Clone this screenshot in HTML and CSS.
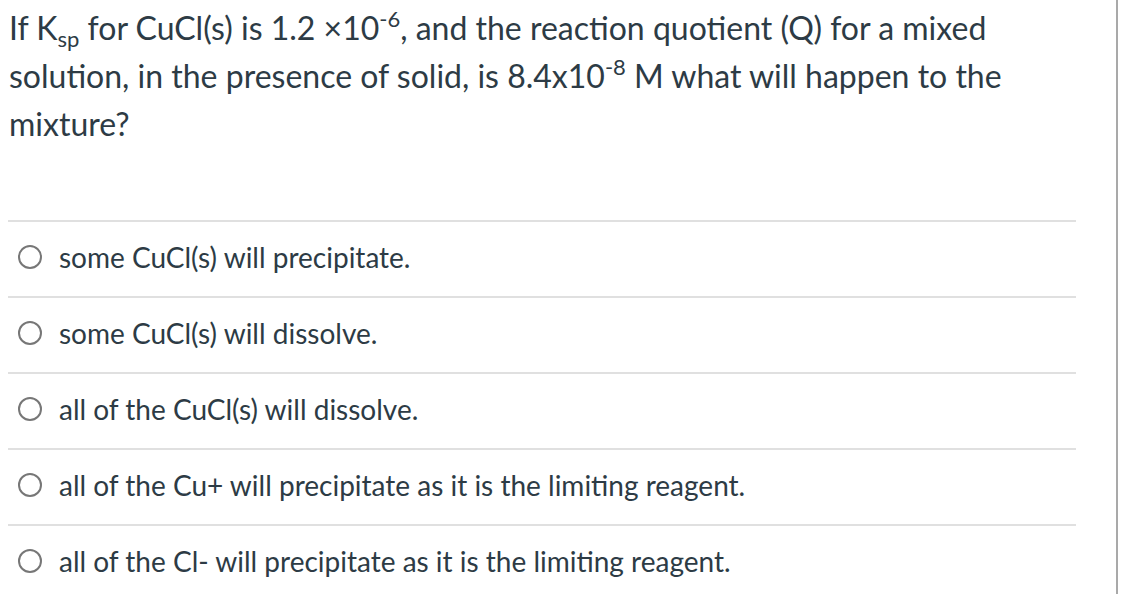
FILE: index.html
```html
<!DOCTYPE html>
<html>
<head>
<meta charset="utf-8">
<link rel="stylesheet" href="styles.css">
</head>
<body>
<div class="page">
  <div class="question">
    <p class="qtext">If K<sub>sp</sub> for CuCl(s) is 1.2 ×10<sup>-6</sup>, and the reaction quotient (Q) for a mixed solution, in the presence of solid, is 8.4x10<sup>-8</sup> M what will happen to the mixture?</p>
  </div>
  <div class="answers">
    <div class="answer"><span class="radio"></span><span class="label">some CuCl(s) will precipitate.</span></div>
    <div class="answer"><span class="radio"></span><span class="label">some CuCl(s) will dissolve.</span></div>
    <div class="answer"><span class="radio"></span><span class="label">all of the CuCl(s) will dissolve.</span></div>
    <div class="answer"><span class="radio"></span><span class="label">all of the Cu+ will precipitate as it is the limiting reagent.</span></div>
    <div class="answer"><span class="radio"></span><span class="label">all of the Cl- will precipitate as it is the limiting reagent.</span></div>
  </div>
</div>
</body>
</html>
```
FILE: styles.css
```css
html, body {
  margin: 0;
  padding: 0;
  background: #fff;
}
body {
  font-family: Lato, "Open Sans", sans-serif;
  color: #2d3b45;
  width: 1122px;
  height: 594px;
  overflow: hidden;
}
.page {
  width: 1116px;
  height: 594px;
  border-right: 2px solid #a9a9a9;
  box-sizing: content-box;
}
.question {
  padding: 4px 0 0 9px;
  height: 216px;
  box-sizing: border-box;
}
.qtext {
  margin: 0;
  font-size: 32px;
  line-height: 48px;
  width: 1040px;
}
.qtext sub, .qtext sup {
  font-size: 22px;
  line-height: 0;
  position: relative;
  vertical-align: baseline;
}
.qtext sub { top: 7px; }
.qtext sup { top: -13px; }
.answers {
  margin: 4px 0 0 8px;
  width: 1068px;
}
.answer {
  display: flex;
  align-items: center;
  height: 76px;
  border-top: 2px solid #e0e0e0;
  box-sizing: border-box;
  padding-bottom: 4px;
}
.radio {
  width: 20px;
  height: 20px;
  border: 2px solid #777;
  border-radius: 50%;
  margin: 0 17px 0 10px;
  flex: none;
}
.label {
  font-size: 28px;
  line-height: 36px;
}
```
